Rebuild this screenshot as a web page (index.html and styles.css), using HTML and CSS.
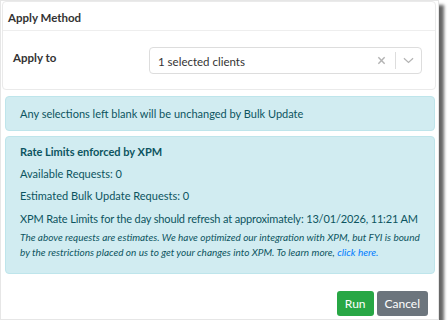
FILE: index.html
```html
<!DOCTYPE html>
<html lang="en">
<head>
    <meta charset="UTF-8">
    <meta name="viewport" content="width=device-width, initial-scale=1.0">
    <title>Bulk Update - Apply Method</title>
    <link rel="stylesheet" href="styles.css">
</head>
<body>
    <div class="dialog">
        <section class="card">
            <header class="card-header">Apply Method</header>
            <div class="card-body">
                <label class="field-label">Apply to</label>
                <div class="select">
                    <span class="select-value">1 selected clients</span>
                    <span class="select-clear">
                        <svg width="9" height="9" viewBox="0 0 10 10"><path d="M1.5 1.5l7 7M8.5 1.5l-7 7" stroke="#b3b3b3" stroke-width="1.6" fill="none"/></svg>
                    </span>
                    <span class="select-sep"></span>
                    <span class="select-arrow">
                        <svg width="11" height="7" viewBox="0 0 12 7"><path d="M1 1l5 4.5L11 1" stroke="#b3b3b3" stroke-width="1.3" fill="none"/></svg>
                    </span>
                </div>
            </div>
        </section>

        <div class="alert">Any selections left blank will be unchanged by Bulk Update</div>

        <div class="alert alert-limits">
            <h4>Rate Limits enforced by XPM</h4>
            <p>Available Requests: 0</p>
            <p>Estimated Bulk Update Requests: 0</p>
            <p class="refresh">XPM Rate Limits for the day should refresh at approximately: 13/01/2026, 11:21 AM</p>
            <p class="note">The above requests are estimates. We have optimized our integration with XPM, but FYI is bound by the restrictions placed on us to get your changes into XPM. To learn more, <a href="#">click here.</a></p>
        </div>

        <footer class="actions">
            <button class="btn btn-run">Run</button>
            <button class="btn btn-cancel">Cancel</button>
        </footer>
    </div>
</body>
</html>
```

FILE: styles.css
```css
body { margin: 0; background: #fff; font-family: Lato, "Noto Sans", sans-serif; color: #212529; }
.dialog { width: 439px; height: 320px; background: #fff; border: 1px solid #e6e6e6; box-shadow: 5px 5px 3px rgba(0, 0, 0, 0.6); box-sizing: border-box; padding: 0 2px 0 1px; display: flex; flex-direction: column; }
.dialog > * { flex-shrink: 0; }
.card { border: 1px solid #eaeaea; border-radius: 4px; height: 89px; box-sizing: border-box; }
.card-header { height: 29px; box-sizing: border-box; padding: 9px 5px 0; font-size: 11.5px; font-weight: 700; color: #333; border-bottom: 1px solid #eee; }
.card-body { display: flex; align-items: flex-start; padding: 16px 13px 0 10px; }
.field-label { width: 136px; font-size: 11.5px; font-weight: 700; color: #333; padding-top: 4px; }
.select { flex: 1; height: 27px; box-sizing: border-box; border: 1px solid #ddd; border-radius: 4px; display: flex; align-items: center; padding-left: 8px; }
.select-value { flex: 1; font-size: 11.5px; color: #333; padding-top: 2px; }
.select-clear { display: flex; padding: 0 9px; }
.select-sep { width: 1px; height: 17px; background: #ddd; }
.select-arrow { display: flex; padding: 0 7px; }
.alert { background: #d1ecf1; color: #0c5460; border: 1px solid #bee5eb; border-radius: 4px; margin: 6px 1px 0 3px; padding: 10px 8px 9px 14px; font-size: 11px; line-height: 14px; }
.alert-limits { margin-top: 5px; padding-top: 7px; padding-bottom: 13px; }
.alert-limits h4 { margin: 0 0 6px; font-size: 11px; line-height: 16px; font-weight: 700; }
.alert-limits p { margin: 0 0 6px; line-height: 16px; }
.alert-limits .refresh { white-space: nowrap; letter-spacing: -0.15px; margin-top: 7px; }
.alert-limits .note { font-size: 10px; font-style: italic; line-height: 15px; margin: -3px 0 0; }
.note a { color: #007bff; text-decoration: none; }
.actions { display: flex; justify-content: flex-end; gap: 3px; padding: 17px 8px 0 0; }
.btn { font-family: inherit; font-size: 12px; color: #fff; border: none; border-radius: 3px; height: 25px; padding: 0 8px; }
.btn-run { background: #28a745; }
.btn-cancel { background: #6c757d; }
```
